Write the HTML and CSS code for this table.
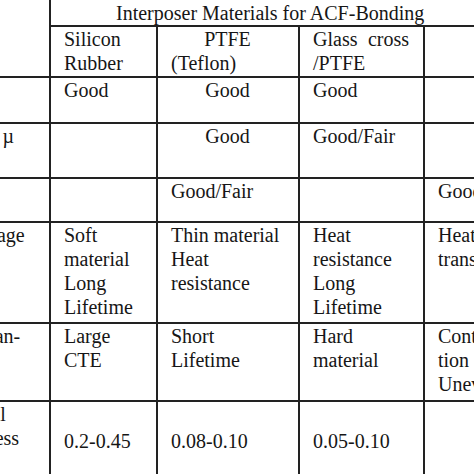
FILE: index.html
```html
<!DOCTYPE html>
<html>
<head>
<meta charset="utf-8">
<link rel="stylesheet" href="styles.css">
</head>
<body>
<div class="frame">
<table class="grid">
  <colgroup>
    <col class="c0">
    <col class="c1">
    <col class="c2">
    <col class="c3">
    <col class="c4">
  </colgroup>
  <tr class="r1">
    <td rowspan="2" class="item"></td>
    <td colspan="4" class="title">Interposer Materials for ACF-Bonding</td>
  </tr>
  <tr class="r2">
    <td>Silicon Rubber</td>
    <td><div class="mid">PTFE</div><div>(Teflon)</div></td>
    <td class="just">Glass cross /PTFE</td>
    <td></td>
  </tr>
  <tr class="r3">
    <td class="item"></td>
    <td>Good</td>
    <td class="mid">Good</td>
    <td>Good</td>
    <td></td>
  </tr>
  <tr class="r4">
    <td class="item">Plane 5 µ</td>
    <td></td>
    <td class="mid">Good</td>
    <td>Good/Fair</td>
    <td></td>
  </tr>
  <tr class="r5">
    <td class="item"></td>
    <td></td>
    <td>Good/Fair</td>
    <td></td>
    <td>Good</td>
  </tr>
  <tr class="r6">
    <td class="item">Advantage</td>
    <td>Soft material Long Lifetime</td>
    <td>Thin material Heat resistance</td>
    <td>Heat resistance Long Lifetime</td>
    <td>Heat<br>transfer</td>
  </tr>
  <tr class="r7">
    <td class="item">Disadvan-<br>tage</td>
    <td>Large CTE</td>
    <td>Short Lifetime</td>
    <td>Hard material</td>
    <td>Conta-<br>tion<br>Uneven</td>
  </tr>
  <tr class="r8">
    <td class="item">Material<br>Thickness<br>(mm)</td>
    <td class="vmid">0.2-0.45</td>
    <td class="vmid">0.08-0.10</td>
    <td class="vmid">0.05-0.10</td>
    <td class="vmid"></td>
  </tr>
</table>
</div>
</body>
</html>
```
FILE: styles.css
```css
html, body {
  margin: 0;
  padding: 0;
  background: #ffffff;
}
body {
  width: 474px;
  height: 474px;
  overflow: hidden;
}
.frame {
  width: 474px;
  height: 474px;
  overflow: hidden;
}
.grid {
  margin-left: -78px;
  margin-top: -2px;
  border-collapse: collapse;
  table-layout: fixed;
  width: 631px;
  font-family: "Liberation Serif", "Times New Roman", serif;
  font-size: 20px;
  line-height: 24px;
  color: #161616;
}
.c0 { width: 127px; }
.c1 { width: 107px; }
.c2 { width: 142px; }
.c3 { width: 125px; }
.c4 { width: 130px; }
.grid td {
  border: 2px solid #222222;
  padding: 0 14px 0 13px;
  vertical-align: top;
  text-align: left;
  overflow: hidden;
  white-space: normal;
}
.grid td.item {
  padding-left: 14px;
  white-space: nowrap;
}
.r1 { height: 26px; }
.r2 { height: 51px; }
.r3 { height: 46px; }
.r4 { height: 55px; }
.r5 { height: 44px; }
.r6 { height: 101px; }
.r7 { height: 78px; }
.r8 { height: 80px; }
.grid td.title {
  padding-left: 65px;
  padding-top: 1px;
  white-space: nowrap;
}
.mid {
  text-align: center;
}
.grid td.mid {
  text-align: center;
}
.grid td.just {
  text-align: justify;
}
.grid td.vmid {
  vertical-align: middle;
}
```
